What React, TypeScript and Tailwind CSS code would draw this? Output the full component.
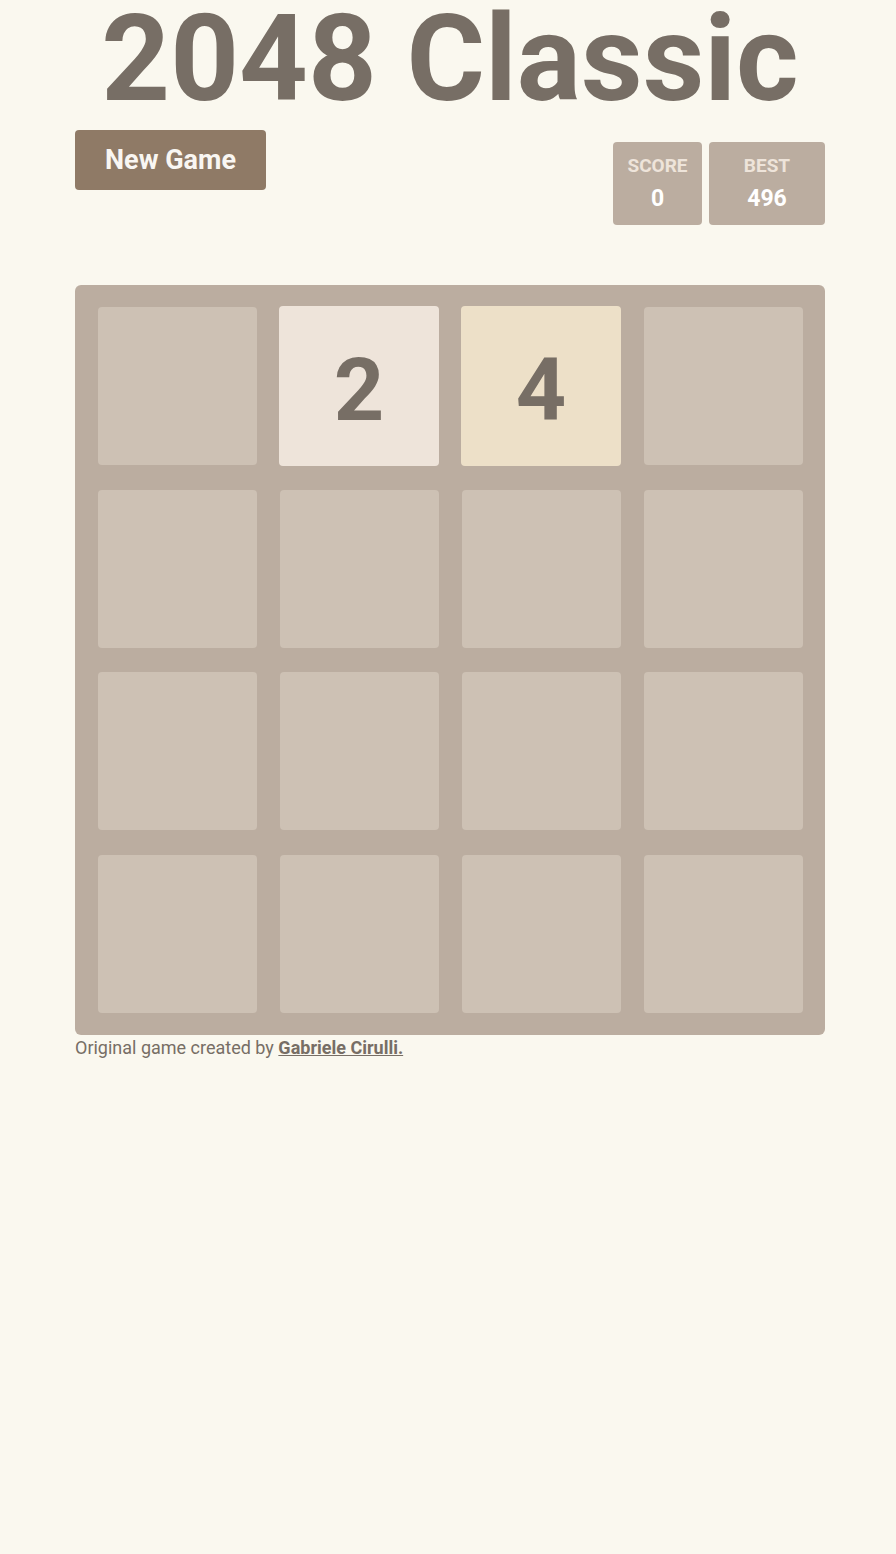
import React from "react";

const board: (number | null)[][] = [
  [null, 2, 4, null],
  [null, null, null, null],
  [null, null, null, null],
  [null, null, null, null],
];

function Tile({ value }: { value: number | null }) {
  if (value === null) {
    return <div className="h-[158px] w-[159px] rounded-[4px] bg-[#cdc1b4]" />;
  }
  const bg = value === 2 ? "bg-[#eee4da]" : "bg-[#ede0c8]";
  return (
    <div
      className={`flex h-[160px] w-[160px] items-center justify-center rounded-[4px] ${bg} pt-[8px] text-[88px] font-bold leading-none text-[#776e65]`}
    >
      {value}
    </div>
  );
}

export default function App() {
  return (
    <div
      className="flow-root h-[1554px] overflow-hidden bg-[#faf8ef] text-[#776e65]"
      style={{ fontFamily: "Roboto, 'Noto Sans', sans-serif" }}
    >
      <div className="ml-[75px] w-[750px]">
        <h1 className="-mt-[11px] text-center text-[120px] font-bold leading-[141px]">
          2048 Classic
        </h1>
        <div className="flex items-start justify-between">
          <button className="h-[60px] w-[191px] rounded-[4px] bg-[#8f7a66] text-[27px] font-bold text-[#f9f6f2]">
            New Game
          </button>
          <div className="mt-[12px] flex gap-[7px]">
            <div className="flex h-[83px] w-[89px] flex-col items-center rounded-[4px] bg-[#bbada0] pt-[12px]">
              <span className="text-[19px] font-bold leading-[24px] text-[#eee4da]">SCORE</span>
              <span className="mt-[9px] text-[23px] font-bold leading-[24px] text-white">0</span>
            </div>
            <div className="flex h-[83px] w-[116px] flex-col items-center rounded-[4px] bg-[#bbada0] pt-[12px]">
              <span className="text-[19px] font-bold leading-[24px] text-[#eee4da]">BEST</span>
              <span className="mt-[9px] text-[23px] font-bold leading-[24px] text-white">496</span>
            </div>
          </div>
        </div>
        <div className="mt-[60px] grid h-[750px] w-[750px] grid-cols-4 grid-rows-4 gap-x-[22px] gap-y-[24px] rounded-[6px] bg-[#bbada0] p-[22px]">
          {board.flat().map((v, i) => (
            <div key={i} className="flex items-center justify-center">
              <Tile value={v} />
            </div>
          ))}
        </div>
        <p className="mt-[1px] text-[18px] leading-[24px]">
          Original game created by{" "}
          <a href="#" className="font-bold underline">
            Gabriele Cirulli.
          </a>
        </p>
      </div>
    </div>
  );
}
